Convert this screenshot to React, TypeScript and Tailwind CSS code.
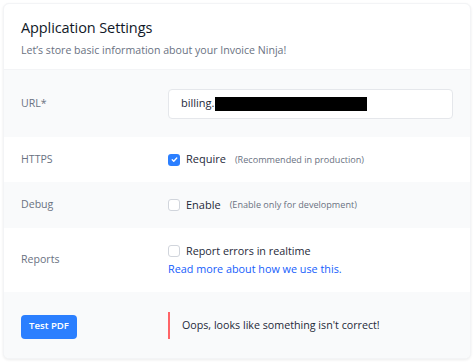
export default function App() {
  return (
    <div className="min-h-screen bg-white p-[3px]" style={{ fontFamily: '"Open Sans", sans-serif' }}>
      <div className="rounded-md border border-gray-100 bg-white shadow-[0_1px_3px_rgba(0,0,0,0.08)] overflow-hidden">
        {/* Header */}
        <div className="px-[17px] pt-[13px] pb-[11px] border-b border-gray-100">
          <h3 className="text-[14.5px] leading-[22px] tracking-[-0.1px] text-gray-900">Application Settings</h3>
          <p className="mt-[3px] text-[10.6px] leading-[16px] text-gray-500">
            Let’s store basic information about your Invoice Ninja!
          </p>
        </div>

        {/* URL */}
        <div className="flex items-center bg-gray-50 px-[17px] h-[67px]">
          <div className="w-[147px] text-[10.6px] text-gray-500">URL*</div>
          <div className="flex-1">
            <div className="flex items-center h-[30px] rounded border border-gray-200 bg-white px-[12px] text-[11px] text-gray-800">
              billing.<span className="ml-[1px] inline-block h-[14px] w-[152px] bg-black" />
            </div>
          </div>
        </div>

        {/* HTTPS */}
        <div className="flex items-center px-[17px] h-[45px]">
          <div className="w-[147px] text-[10.6px] text-gray-500">HTTPS</div>
          <div className="flex items-center">
            <span className="flex h-[12px] w-[12px] items-center justify-center rounded-[3px] bg-blue-500">
              <svg viewBox="0 0 12 12" className="h-[9px] w-[9px]" fill="none" stroke="white" strokeWidth="1.8" strokeLinecap="round" strokeLinejoin="round">
                <path d="M3 6.3l2 2 4-4.3" />
              </svg>
            </span>
            <span className="ml-[6px] text-[11px] text-gray-800">Require</span>
            <span className="ml-[9px] text-[9.1px] text-gray-500">(Recommended in production)</span>
          </div>
        </div>

        {/* Debug */}
        <div className="flex items-center bg-gray-50 px-[17px] h-[46px]">
          <div className="w-[147px] text-[10.6px] text-gray-500">Debug</div>
          <div className="flex items-center">
            <span className="h-[12px] w-[12px] rounded-[3px] border border-gray-300 bg-white" />
            <span className="ml-[6px] text-[11px] text-gray-800">Enable</span>
            <span className="ml-[9px] text-[9.1px] text-gray-500">(Enable only for development)</span>
          </div>
        </div>

        {/* Reports */}
        <div className="flex items-center px-[17px] h-[64px]">
          <div className="w-[147px] text-[10.6px] text-gray-500">Reports</div>
          <div className="flex flex-col">
            <div className="flex items-center">
              <span className="h-[12px] w-[12px] rounded-[3px] border border-gray-300 bg-white" />
              <span className="ml-[6px] text-[10.8px] text-gray-800">Report errors in realtime</span>
            </div>
            <a className="mt-[2px] text-[10.8px] text-blue-600">Read more about how we use this.</a>
          </div>
        </div>

        {/* Footer */}
        <div className="flex items-center bg-gray-50 px-[17px] h-[66px]">
          <div className="w-[147px]">
            <button className="h-[24px] w-[56px] rounded bg-blue-500 text-[9.6px] font-semibold text-white">Test PDF</button>
          </div>
          <div className="flex items-center h-[27px] border-l-2 border-red-400 pl-[12px] text-[10.7px] text-gray-800">
            Oops, looks like something isn't correct!
          </div>
        </div>
      </div>
    </div>
  );
}
